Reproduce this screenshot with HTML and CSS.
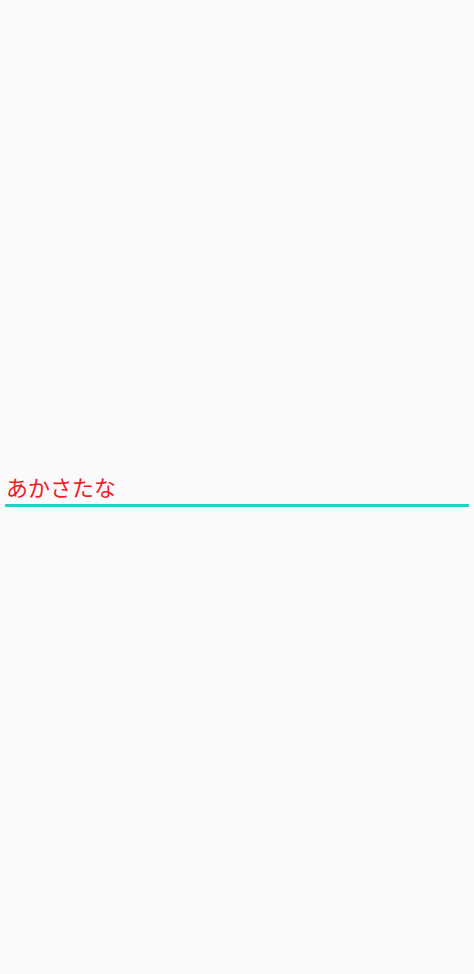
FILE: index.html
```html
<!DOCTYPE html>
<html lang="ja">
<head>
<meta charset="utf-8">
<link rel="stylesheet" href="styles.css">
</head>
<body>
<main class="screen">
  <div class="field">
    <span class="field-text">あかさたな</span>
  </div>
</main>
</body>
</html>
```
FILE: styles.css
```css
html, body {
  margin: 0;
  padding: 0;
  background: #fafafa;
}
.screen {
  height: 974px;
  display: flex;
  flex-direction: column;
  justify-content: center;
  padding: 3px 5px 0;
  box-sizing: border-box;
}
.field {
  border-bottom: 3px solid #1fd3c3;
  padding: 0 1px 3px;
}
.field-text {
  font-family: "Noto Sans CJK JP", "Noto Sans", sans-serif;
  font-size: 22px;
  line-height: 30px;
  color: #ec1d25;
}
```
